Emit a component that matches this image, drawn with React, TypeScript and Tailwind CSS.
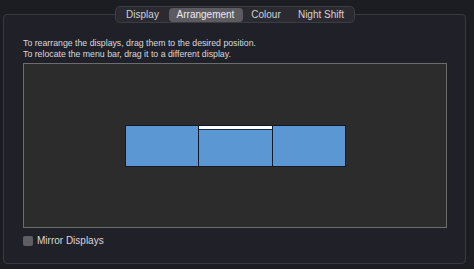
import React from "react";

const font = { fontFamily: '"Liberation Sans", Arial, sans-serif' };

export default function App() {
  const tabs = [
    { label: "Display", w: "w-[52px]", active: false },
    { label: "Arrangement", w: "w-[74px]", active: true },
    { label: "Colour", w: "w-[47px]", active: false },
    { label: "Night Shift", w: "w-[63px]", active: false },
  ];
  return (
    <div
      className="w-[474px] h-[269px] bg-[#1c1c23] pt-[14px] pl-[3px] overflow-hidden"
      style={font}
    >
      <div className="relative w-[463px] h-[250px] border border-[#393940] rounded-[4px] bg-[#202028] pl-[19px] pr-[18px] pt-[23px] flex flex-col">
        {/* segmented control overlapping the border */}
        <div className="absolute left-0 right-0 -top-[9px] flex justify-center">
          <div className="flex items-center h-[17px] p-[1px] rounded-[5px] bg-[#2a2a30] border border-[#3c3c43]">
            {tabs.map((t) => (
              <div
                key={t.label}
                className={`${t.w} h-[14px] flex items-center justify-center rounded-[4px] text-[10px] leading-none ${
                  t.active ? "bg-[#5b5b60] text-[#ececec]" : "text-[#d4d4d6]"
                }`}
              >
                {t.label}
              </div>
            ))}
          </div>
        </div>

        <div className="text-[8.75px] leading-[10.5px] text-[#dadadc]">
          <div>To rearrange the displays, drag them to the desired position.</div>
          <div>To relocate the menu bar, drag it to a different display.</div>
        </div>

        <div className="mt-[4px] h-[165px] w-[424px] border border-[#6c6c6e] bg-[#2c2c2c] flex items-center justify-center">
          <div className="flex">
            <div className="w-[74px] h-[42px] bg-[#5a97d3] border border-[#101a26]" />
            <div className="-ml-px w-[75px] h-[42px] bg-[#5a97d3] border border-[#101a26] flex flex-col">
              <div className="h-[3px] bg-white" />
              <div className="h-px bg-[#1b2a3a]" />
            </div>
            <div className="-ml-px w-[74px] h-[42px] bg-[#5a97d3] border border-[#101a26]" />
          </div>
        </div>

        <div className="mt-[7px] h-[12px] flex items-center gap-[4px]">
          <div className="w-[10px] h-[10px] rounded-[2px] bg-[#5e5e63]" />
          <span className="text-[10px] leading-none text-[#dadadc]">Mirror Displays</span>
        </div>
      </div>
    </div>
  );
}
